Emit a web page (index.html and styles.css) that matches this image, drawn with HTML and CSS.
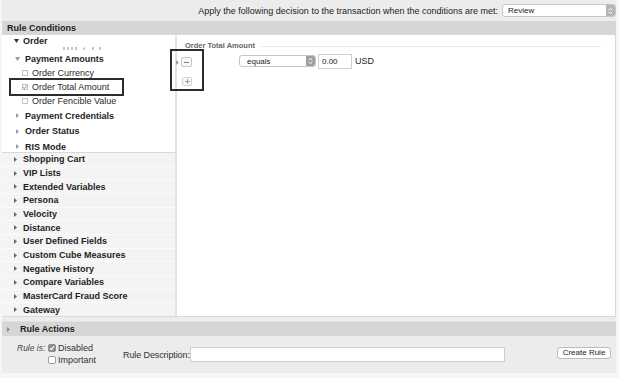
FILE: index.html
```html
<!DOCTYPE html>
<html>
<head>
<meta charset="utf-8">
<link rel="stylesheet" href="styles.css">
</head>
<body>
<div class="app">
  <div class="topbar">
    <span class="apply-label">Apply the following decision to the transaction when the conditions are met:</span>
    <div class="select select-review">
      <span class="select-text">Review</span>
      <span class="select-btn"><svg width="5" height="8" viewBox="0 0 5 8"><path d="M0.7 3.2L2.5 1.3L4.3 3.2M0.7 4.8L2.5 6.7L4.3 4.8" fill="none" stroke="#fff" stroke-width="1"/></svg></span>
    </div>
  </div>

  <div class="section-head">Rule Conditions</div>

  <div class="main">
    <div class="left">
      <div class="tree">
        <div class="t-order"><span class="tw"><svg class="tri" width="5" height="4" viewBox="0 0 5 4"><path d="M0 0H5L2.5 4Z" fill="#333"/></svg></span>Order</div>
        <div class="peek"><svg width="40" height="3" viewBox="0 0 40 3"><path d="M1 0V3M5 0V3M9 0V3M13 0V3M22 0.5C22 2.5 20.5 2.5 20 2M30 0V2.5L29 3M37 0V3" fill="none" stroke="#8a8a8a" stroke-width="1"/></svg></div>
        <div class="t-group"><span class="tw"><svg width="5" height="4" viewBox="0 0 5 4"><path d="M0 0H5L2.5 4Z" fill="#9a9a9a"/></svg></span>Payment Amounts</div>
        <div class="t-check"><span class="cb"></span>Order Currency</div>
        <div class="t-check t-hl-row"><span class="hl"><span class="cb"><svg width="6" height="6" viewBox="0 0 6 6"><path d="M1 3.2L2.4 4.6L5 1.2" fill="none" stroke="#8a8a8a" stroke-width="1"/></svg></span>Order Total Amount</span></div>
        <div class="t-check"><span class="cb"></span>Order Fencible Value</div>
        <div class="t-group t-tall"><span class="tw"><svg width="3" height="5" viewBox="0 0 3 5"><path d="M0 0L3 2.5L0 5Z" fill="#9a9a9a"/></svg></span>Payment Credentials</div>
        <div class="t-group t-tall"><span class="tw"><svg width="3" height="5" viewBox="0 0 3 5"><path d="M0 0L3 2.5L0 5Z" fill="#9a9a9a"/></svg></span>Order Status</div>
        <div class="t-group t-tall"><span class="tw"><svg width="3" height="5" viewBox="0 0 3 5"><path d="M0 0L3 2.5L0 5Z" fill="#9a9a9a"/></svg></span>RIS Mode</div>
      </div>
      <div class="cats">
        <div class="cat"><svg width="3" height="5" viewBox="0 0 3 5"><path d="M0 0L3 2.5L0 5Z" fill="#666"/></svg>Shopping Cart</div>
        <div class="cat"><svg width="3" height="5" viewBox="0 0 3 5"><path d="M0 0L3 2.5L0 5Z" fill="#666"/></svg>VIP Lists</div>
        <div class="cat"><svg width="3" height="5" viewBox="0 0 3 5"><path d="M0 0L3 2.5L0 5Z" fill="#666"/></svg>Extended Variables</div>
        <div class="cat"><svg width="3" height="5" viewBox="0 0 3 5"><path d="M0 0L3 2.5L0 5Z" fill="#666"/></svg>Persona</div>
        <div class="cat"><svg width="3" height="5" viewBox="0 0 3 5"><path d="M0 0L3 2.5L0 5Z" fill="#666"/></svg>Velocity</div>
        <div class="cat"><svg width="3" height="5" viewBox="0 0 3 5"><path d="M0 0L3 2.5L0 5Z" fill="#666"/></svg>Distance</div>
        <div class="cat"><svg width="3" height="5" viewBox="0 0 3 5"><path d="M0 0L3 2.5L0 5Z" fill="#666"/></svg>User Defined Fields</div>
        <div class="cat"><svg width="3" height="5" viewBox="0 0 3 5"><path d="M0 0L3 2.5L0 5Z" fill="#666"/></svg>Custom Cube Measures</div>
        <div class="cat"><svg width="3" height="5" viewBox="0 0 3 5"><path d="M0 0L3 2.5L0 5Z" fill="#666"/></svg>Negative History</div>
        <div class="cat"><svg width="3" height="5" viewBox="0 0 3 5"><path d="M0 0L3 2.5L0 5Z" fill="#666"/></svg>Compare Variables</div>
        <div class="cat"><svg width="3" height="5" viewBox="0 0 3 5"><path d="M0 0L3 2.5L0 5Z" fill="#666"/></svg>MasterCard Fraud Score</div>
        <div class="cat"><svg width="3" height="5" viewBox="0 0 3 5"><path d="M0 0L3 2.5L0 5Z" fill="#666"/></svg>Gateway</div>
      </div>
    </div>

    <div class="right">
      <div class="fs-head"><span class="legend">Order Total Amount</span><span class="fs-line"></span></div>
      <div class="cond-row">
        <div class="ctl">
          <span class="ctl-tri"><svg width="3" height="5" viewBox="0 0 3 5"><path d="M0 0L3 2.5L0 5Z" fill="#999"/></svg></span>
          <span class="btn-minus"><svg width="5" height="1" viewBox="0 0 5 1"><rect width="5" height="1" fill="#7a7a7a"/></svg></span>
          <span></span>
          <span class="btn-plus"><svg width="5" height="5" viewBox="0 0 5 5"><path d="M2 0H3V2H5V3H3V5H2V3H0V2H2Z" fill="#9a9a9a"/></svg></span>
        </div>
        <div class="select select-op">
          <span class="select-text">equals</span>
          <span class="select-btn"><svg width="5" height="8" viewBox="0 0 5 8"><path d="M0.7 3.2L2.5 1.3L4.3 3.2M0.7 4.8L2.5 6.7L4.3 4.8" fill="none" stroke="#fff" stroke-width="1"/></svg></span>
        </div>
        <div class="amount">0.00</div>
        <span class="currency">USD</span>
      </div>
    </div>

    <div class="annot"></div>
  </div>

  <div class="section-head actions-head"><svg width="3" height="5" viewBox="0 0 3 5"><path d="M0 0L3 2.5L0 5Z" fill="#8a8a8a"/></svg>Rule Actions</div>

  <div class="bottom">
    <span class="rule-is">Rule is:</span>
    <div class="checks">
      <div class="chk-line"><span class="box box-on"><svg width="8" height="8" viewBox="0 0 8 8"><path d="M2 4.2L3.4 5.6L6 2.4" fill="none" stroke="#fff" stroke-width="1.3"/></svg></span>Disabled</div>
      <div class="chk-line"><span class="box"></span>Important</div>
    </div>
    <div class="desc">
      <span class="desc-label">Rule Description:</span>
      <div class="desc-input"></div>
    </div>
    <div class="create-btn">Create Rule</div>
  </div>
</div>
</body>
</html>
```

FILE: styles.css
```css
* { box-sizing: border-box; }
html, body { margin: 0; padding: 0; }
body {
  width: 619px;
  height: 378px;
  overflow: hidden;
  background: #f6f6f6;
  font-family: "Liberation Sans", Arial, Helvetica, sans-serif;
  font-size: 9px;
  color: #222;
}
.app {
  margin: 0 3px 0 2px;
  height: 373px;
  background: #ececec;
  display: flex;
  flex-direction: column;
}

/* top bar */
.topbar {
  height: 21px;
  flex: none;
  display: flex;
  align-items: center;
  justify-content: flex-end;
  gap: 4px;
}
.apply-label { color: #1c1c1c; }
.select {
  display: flex;
  align-items: stretch;
  background: #fff;
  border: 1px solid #c6c6c6;
  border-radius: 3px;
  overflow: hidden;
}
.select-text {
  flex: 1;
  font-size: 8px;
  padding-left: 5px;
  display: flex;
  align-items: center;
  color: #222;
}
.select-btn {
  width: 9px;
  background: #a3a3a3;
  display: flex;
  align-items: center;
  justify-content: center;
}
.select-review { width: 114px; height: 13px; }
.select-review .select-btn { background: #b4b4b4; }

/* section headers */
.section-head {
  height: 14px;
  flex: none;
  background: #d6d6d6;
  font-weight: bold;
  line-height: 14px;
  padding-left: 5px;
  color: #222;
}
.actions-head {
  height: 15px;
  margin-top: 4px;
  line-height: 15px;
  display: flex;
  align-items: center;
  gap: 10px;
  padding-left: 5px;
  border-top: 1px solid #e2e2e2;
}

/* main area */
.main {
  position: relative;
  height: 282px;
  flex: none;
  display: flex;
  border-right: 1px solid #d9d9d9;
  border-bottom: 1px solid #d9d9d9;
}
.left {
  width: 175px;
  flex: none;
  display: flex;
  flex-direction: column;
  border-right: 2px solid #e3e3e3;
}
.tree {
  height: 117px;
  flex: none;
  overflow: hidden;
  background: #fff;
}
.tw {
  width: 6px;
  display: flex;
  align-items: center;
  justify-content: center;
}
.t-order {
  height: 12px;
  display: flex;
  align-items: center;
  gap: 4px;
  padding-left: 11px;
  font-weight: bold;
  color: #1e1e1e;
}
.peek {
  height: 3px;
  overflow: hidden;
  padding-left: 61px;
  display: flex;
}
.t-group {
  height: 15px;
  margin-top: 1px;
  display: flex;
  align-items: center;
  gap: 5px;
  padding-left: 12px;
  font-weight: bold;
  color: #1e1e1e;
}
.t-tall { height: 15.5px; margin-top: 0; }
.t-check {
  height: 14px;
  display: flex;
  align-items: center;
  gap: 4px;
  padding-left: 20px;
  color: #2a2a2a;
}
.cb {
  width: 6px;
  height: 6px;
  border: 1px solid #c2c2c2;
  background: #fff;
  display: flex;
  align-items: center;
  justify-content: center;
}
.cb svg { margin: -1px; flex: none; }
.t-hl-row { padding-left: 9px; }
.hl {
  width: 111px;
  height: 14px;
  display: flex;
  align-items: center;
  gap: 4px;
  padding-left: 11px;
  outline: 2px solid #2c2c2c;
}

.cats {
  flex: 1;
  display: flex;
  flex-direction: column;
  background: #f4f4f4;
  border-top: 1px solid #d8d8d8;
}
.cat {
  flex: 1;
  display: flex;
  align-items: center;
  gap: 6px;
  padding-left: 12px;
  font-weight: bold;
  color: #1e1e1e;
  border-bottom: 1px solid #fbfbfb;
}
.cat:last-child { border-bottom: none; }

/* right pane */
.right {
  flex: 1;
  background: #fff;
  padding: 6px 14px 0 8px;
}
.fs-head {
  height: 9px;
  display: flex;
  align-items: center;
  gap: 6px;
}
.legend {
  font-size: 7.5px;
  font-weight: bold;
  color: #666;
}
.fs-line { flex: 1; border-top: 1px solid #e8e8e8; margin-top: 1px; }
.cond-row {
  margin-top: 4px;
  margin-left: -9px;
  display: flex;
  align-items: flex-start;
}
.ctl {
  display: grid;
  grid-template-columns: 5px 11px;
  row-gap: 10px;
  padding-top: 3px;
}
.ctl-tri { display: flex; align-items: center; }
.btn-minus, .btn-plus {
  border: 1px solid #c4c4c4;
  border-radius: 2px;
  background: #f9f9f9;
  display: flex;
  align-items: center;
  justify-content: center;
}
.btn-minus { width: 11px; height: 10px; }
.btn-plus { width: 10px; height: 9px; margin-left: 1px; border-color: #d2d2d2; }
.select-op {
  width: 77px;
  height: 12px;
  margin-left: 47px;
  margin-top: 1px;
}
.select-op .select-text { padding-left: 7px; }
.select-op .select-btn { background: #9f9f9f; }
.amount {
  width: 34px;
  height: 15px;
  margin-left: 2px;
  border: 1px solid #cfcfcf;
  background: #fff;
  font-size: 8px;
  line-height: 13px;
  padding-left: 3px;
  color: #222;
}
.currency { margin-left: 3px; line-height: 15px; color: #1e1e1e; }

.annot {
  position: absolute;
  left: 168px;
  top: 14px;
  width: 34px;
  height: 42px;
  border: 2px solid #2c2c2c;
}

/* bottom */
.bottom {
  flex: 1;
  display: flex;
  align-items: flex-start;
  padding: 6px 5px 0 15px;
  color: #333;
}
.rule-is {
  flex: none;
  width: 31px;
  white-space: nowrap;
  font-size: 8.5px;
  font-style: italic;
  line-height: 12px;
  color: #444;
}
.checks {
  flex: none;
  width: 75px;
  display: flex;
  flex-direction: column;
}
.chk-line {
  height: 12px;
  display: flex;
  align-items: center;
  gap: 2px;
}
.box {
  width: 8px;
  height: 8px;
  border-radius: 2px;
  border: 1px solid #9c9c9c;
  background: #fff;
  display: flex;
}
.box-on { background: #8c8c8c; border-color: #8c8c8c; }
.box-on svg { margin: -1px; }
.desc {
  margin-top: 5px;
  display: flex;
  align-items: center;
}
.desc-label { color: #333; white-space: nowrap; letter-spacing: -0.1px; }
.desc-input {
  width: 315px;
  height: 15px;
  background: #fff;
  border: 1px solid #cdcdcd;
}
.create-btn {
  margin-left: auto;
  margin-top: 5px;
  width: 54px;
  height: 12px;
  border: 1px solid #bcbcbc;
  border-radius: 3px;
  background: #fff;
  font-size: 8px;
  line-height: 10px;
  text-align: center;
  color: #222;
}
```
